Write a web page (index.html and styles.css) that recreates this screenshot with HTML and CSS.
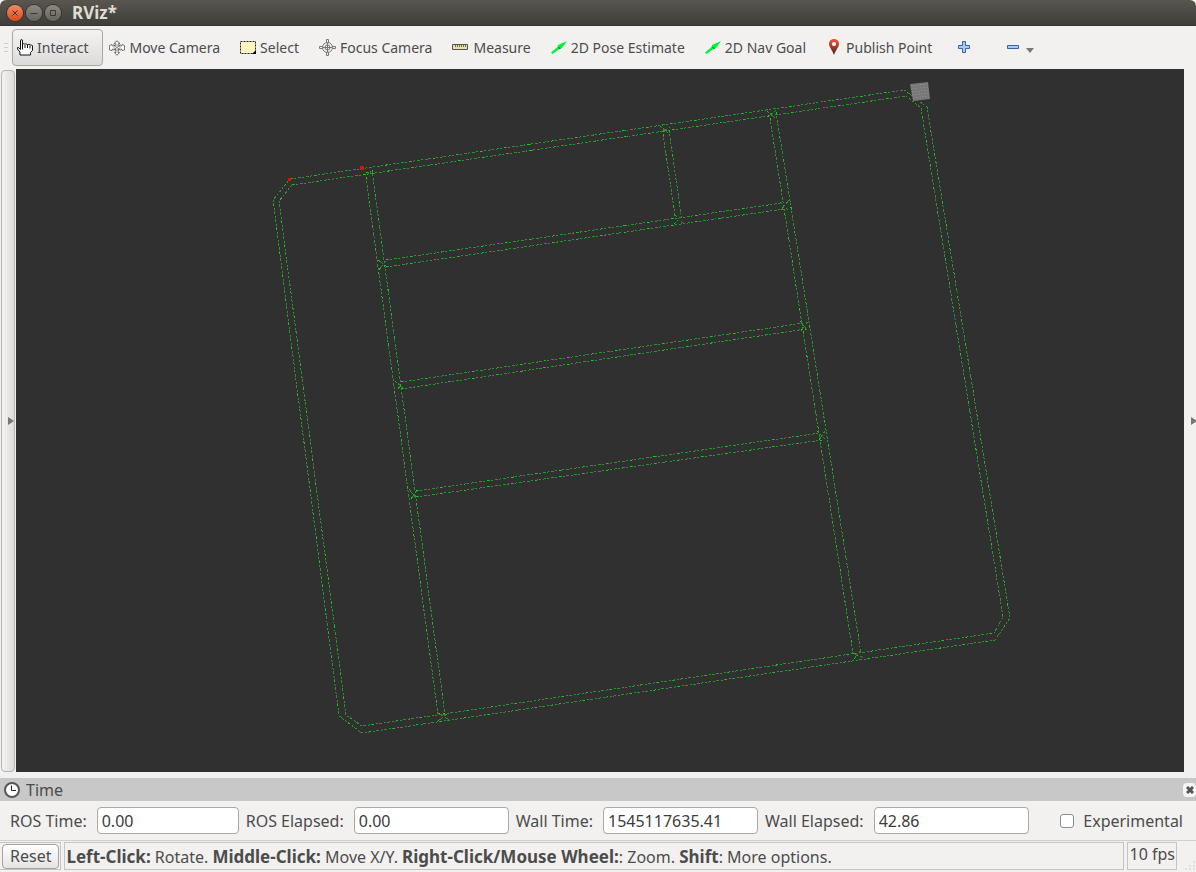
FILE: index.html
```html
<!DOCTYPE html>
<html lang="en">
<head>
<meta charset="utf-8">
<meta name="viewport" content="width=device-width, initial-scale=1">
<title>RViz*</title>
<link rel="stylesheet" href="styles.css">
</head>
<body>

<header class="titlebar">
  <button class="win-btn close" aria-label="Close"><svg width="16" height="16" viewBox="0 0 16 16"><path d="M5.500 5.500l5 5M10.500 5.500l-5 5"/></svg></button>
  <button class="win-btn" aria-label="Minimize"><svg width="16" height="16" viewBox="0 0 16 16"><path d="M4.500 8.500h7"/></svg></button>
  <button class="win-btn" aria-label="Maximize"><svg width="16" height="16" viewBox="0 0 16 16"><path d="M5.500 5.500h5v5h-5z"/></svg></button>
  <h1>RViz*</h1>
</header>

<nav class="toolbar">
  <span class="grip"></span>
  <button class="tool active">
    <svg width="16" height="18" viewBox="0 0 16 18"><path d="M5.500 11V2.500q0-1.500-1-1.500T3.500 2.500V11L1.500 9Q0 8.500.5 10.500L3 13.500V16.500H13.500V14L15.500 12V7.500Q15 6 13.500 6.500Q12 5.500 10.500 6Q9 5 7.500 5.500Q6.500 5 5.500 5.500" fill="#fff" stroke="#111" transform="translate(0 -.5)"/><path d="M8 6v3M10.500 6v3M13 6.500v3" stroke="#111" fill="none"/></svg>
    Interact
  </button>
  <button class="tool">
    <svg width="16" height="16" viewBox="0 0 16 16" fill="#fff" stroke="#555"><path d="M8 .8L11 3.500H9.500L10 5.500L12.500 6L13 4.500L15.500 5.500V10L13 10.500L12.500 9L9.500 9.500L9 12.500H10.500L8 15.300L5.500 12.500H7L6.500 9.500L3.500 9L3 10.500L.5 10V5.500L3 4.500L3.500 6L6 5.500L6.500 3.500H5z" stroke-width=".8"/><path d="M4.500 4.500l7 6M11.500 4.500l-7 6M5 7.500l3-3 3 3-3 3z" fill="none" stroke-width=".7"/></svg>
    Move Camera
  </button>
  <button class="tool">
    <svg width="16" height="14" viewBox="0 0 16 14"><path d="M.5 .5h15v12H.5z" fill="#fdf5bd" stroke="#222" stroke-dasharray="2 1"/><path d="M16 9v4h-4z"/></svg>
    Select
  </button>
  <button class="tool">
    <svg width="17" height="17" viewBox="0 0 17 17" fill="none" stroke="#777"><circle cx="8.500" cy="8.500" r="5"/><circle cx="8.500" cy="8.500" r="2.500"/><path d="M7.500 4V.5h2V4M7.500 13v3.500h2V13M4 7.500H.5v2H4M13 7.500h3.500v2H13M8.500 4v9M4 8.500h9"/></svg>
    Focus Camera
  </button>
  <button class="tool">
    <svg width="17" height="8" viewBox="0 0 17 8"><path d="M.5 .5h15v5H.5z" fill="#eadfab" stroke="#555"/><path d="M3.500 1v2M5.500 1v2M7.500 1v2M9.500 1v2M11.500 1v2M13.500 1v2" stroke="#776f4a"/></svg>
    Measure
  </button>
  <button class="tool">
    <svg width="16" height="14" viewBox="0 0 16 14"><path d="M0 11.500L6.500 6 7 4 16 0 11 7 8.500 8 1.500 13z" fill="#00f43c"/><path d="M7 5.500l3 2-1.500.5z" fill="#075b17"/></svg>
    2D Pose Estimate
  </button>
  <button class="tool">
    <svg width="16" height="14" viewBox="0 0 16 14"><path d="M0 11.500L6.500 6 7 4 16 0 11 7 8.500 8 1.500 13z" fill="#00f43c"/><path d="M7 5.500l3 2-1.500.5z" fill="#075b17"/></svg>
    2D Nav Goal
  </button>
  <button class="tool pin">
    <svg width="12" height="18" viewBox="0 0 12 18"><defs><linearGradient id="pin" x2="0" y2="1"><stop stop-color="#f4553a"/><stop offset="1" stop-color="#4d2410"/></linearGradient></defs><path d="M6 0C2.500 0 1 2.500 1 5c0 3 3 5.500 5 11 2-5.500 5-8 5-11 0-2.500-1.500-5-5-5z" fill="url(#pin)"/><circle cx="6" cy="5" r="2" fill="#fff"/></svg>
    Publish Point
  </button>
  <button class="tool add" aria-label="Add tool">
    <svg width="12" height="14" viewBox="0 0 12 14"><path d="M4.500.5h3v4h4v3h-4v4h-3v-4h-4v-3h4z" fill="#a9caef" stroke="#3465a4"/></svg>
  </button>
  <button class="tool remove" aria-label="Remove tool">
    <svg width="12" height="14" viewBox="0 0 12 14"><path d="M.5 4.500h11v3H.5z" fill="#a9caef" stroke="#3465a4"/></svg>
    <svg width="8" height="5" viewBox="0 0 8 5" class="caret"><path d="M0 0h8L4 5z" fill="#777"/></svg>
  </button>
</nav>

<main class="view">
  <button class="side left" aria-label="Show left panel"><svg width="6" height="8" viewBox="0 0 6 8"><path d="M0 0l6 4-6 4z" fill="#777"/></svg></button>
  <svg class="map" viewBox="16 69 1168 703" preserveAspectRatio="xMidYMid slice">
    <defs>
      <g id="roads">
        <!-- outer ring -->
        <path d="M290 179L904 90L927 107L1010 618L995 640L362 733L339 716L273 200Z"/>
        <path d="M292 185L906 96L921 108L1003 617L994 633L362 726L346 715L279 201Z"/>
        <!-- long streets -->
        <path d="M366 177L438 715M372 170L445 715"/>
        <path d="M770 118L853 653M776 112L861 653"/>
        <path d="M663 134L675 216M669 130L681 214"/>
        <!-- cross streets -->
        <path d="M386 260L782 203M386 267L784 209"/>
        <path d="M401 382L804 323M401 389L806 329"/>
        <path d="M416 491L820 433M416 497L822 440"/>
        <!-- junctions -->
        <path d="M366 172L375 174M367 175L373 169M660 126L669 134M662 132L670 127M767 111L776 119M768 117L777 109"/>
        <path d="M378 260L386 266M379 270L386 260M395 381L403 388M398 389L403 381M409 489L416 498M411 499L417 490"/>
        <path d="M675 215L683 223M674 224L682 216M780 202L788 210M781 210L789 200M800 321L807 330M801 331L808 321M817 431L825 439M819 440L825 431"/>
        <path d="M438 713L449 720M438 721L448 713M853 653L864 658M854 659L861 650"/>
      </g>
    </defs>
    <use href="#roads" class="road"/>
    <use href="#roads" class="road-bright"/>
    <path d="M910 84l18-2 2 17-17 2z" fill="#777"/>
    <path d="M911 86l17-2M911 89l17-2M912 92l17-2M912 95l17-2M913 98l16-2" stroke="#8b8b8b" stroke-dasharray="2 1"/>
    <path d="M360 166h4v4h-4zM288 178h3v3h-3z" fill="#e80c08"/>
  </svg>
  <button class="side right" aria-label="Show right panel"><svg width="6" height="8" viewBox="0 0 6 8"><path d="M0 0l6 4-6 4z" fill="#777"/></svg></button>
</main>

<section class="time">
  <div class="time-head">
    <svg width="16" height="16" viewBox="0 0 16 16"><circle cx="8" cy="8" r="7" fill="#fff" stroke="#555" stroke-width="2"/><path d="M7.500 3.500v5H12" fill="none" stroke="#222"/></svg>
    <h2>Time</h2>
    <button class="panel-close" aria-label="Close panel"><svg width="8" height="8" viewBox="0 0 8 8"><path d="M1 1l6 6M7 1L1 7" stroke="#555" stroke-width="3"/></svg></button>
  </div>
  <form class="time-row">
    <label for="ros-time">ROS Time:</label>
    <input type="text" id="ros-time" value="0.00" class="short">
    <label for="ros-elapsed">ROS Elapsed:</label>
    <input type="text" id="ros-elapsed" value="0.00">
    <label for="wall-time">Wall Time:</label>
    <input type="text" id="wall-time" value="1545117635.41">
    <label for="wall-elapsed">Wall Elapsed:</label>
    <input type="text" id="wall-elapsed" value="42.86">
    <label class="check"><input type="checkbox"> Experimental</label>
  </form>
</section>

<footer class="status">
  <div class="cell reset"><button>Reset</button></div>
  <p class="cell hint"><b>Left-Click:</b> Rotate. <b>Middle-Click:</b> Move X/Y. <b>Right-Click/Mouse Wheel:</b>: Zoom. <b>Shift</b>: More options.</p>
  <div class="cell fps">10 fps</div>
  <svg class="resize" width="16" height="28" viewBox="0 0 16 28"><path d="M13 20h2M9 24h2M13 24h2M5 27h2M9 27h2M13 27h2" stroke="#cfcdcb"/></svg>
</footer>

</body>
</html>
```
FILE: styles.css
```css
* {
  box-sizing: border-box;
}
body {
  margin: 0;
  min-height: 100vh;
  display: flex;
  flex-direction: column;
  background: #f2f1f0;
  color: #4c4c4c;
  font-family: "Noto Sans", "Open Sans", sans-serif;
  font-size: 16px;
}
h1, h2, p {
  margin: 0;
}
button, input {
  font: inherit;
  color: inherit;
}
button {
  padding: 0;
  border: none;
  background: none;
}
svg {
  display: block;
  flex: none;
}

/* title bar */
.titlebar {
  display: flex;
  align-items: center;
  gap: 3px;
  height: 26px;
  padding-left: 7px;
  background: linear-gradient(#59564e, #3e3d39);
  border-bottom: 1px solid #353430;
  border-radius: 6px 6px 0 0;
}
.titlebar h1 {
  margin-left: 8px;
  font-size: 17px;
  line-height: 24px;
  color: #dfdbd2;
}
.win-btn {
  width: 16px;
  height: 16px;
  border-radius: 50%;
  background: linear-gradient(#8b8980, #66645d);
  box-shadow: 0 0 0 1px #35342f;
}
.win-btn.close {
  background: linear-gradient(#f58a63, #dc4a1c);
}
.win-btn path {
  fill: none;
  stroke: #3a3833;
}

/* toolbar */
.toolbar {
  display: flex;
  align-items: center;
  height: 43px;
  padding-left: 4px;
}
.grip {
  width: 4px;
  height: 9px;
  margin-right: 4px;
  background: repeating-linear-gradient(#d0cecb 0 1px, transparent 1px 4px);
}
.tool {
  display: flex;
  align-items: center;
  gap: 4px;
  height: 37px;
  padding: 0 14px 0 6px;
  font-size: 14px;
  white-space: nowrap;
}
.tool.active {
  padding: 0 14px 0 4px;
  border: 1px solid #a9a7a3;
  border-radius: 4px;
  background: linear-gradient(#f4f3f2, #dddbd9);
}
.tool.pin {
  gap: 6px;
  padding-left: 8px;
}
.tool.add {
  padding: 0 19px 0 12px;
}
.tool.remove {
  padding-left: 18px;
  gap: 7px;
}
.caret {
  margin-top: 6px;
}

/* 3d view */
.view {
  flex: 1;
  display: flex;
}
.map {
  flex: 1;
  min-width: 0;
  height: calc(100vh - 169px);
  background: #303030;
}
.side {
  display: flex;
  align-items: center;
}
.side.left {
  width: 14px;
  margin: 1px 1px 0;
  padding-left: 6px;
  border: 1px solid #b5b3b0;
  border-radius: 4px;
  background: linear-gradient(90deg, #f3f2f1, #dedcda);
}
.side.right {
  width: 12px;
  padding-left: 7px;
}
.road, .road-bright {
  fill: none;
  stroke: #2a922a;
  stroke-dasharray: 3 1 2 2;
  shape-rendering: crispEdges;
}
.road-bright {
  stroke: #22c022;
  stroke-dasharray: 2 22;
}

/* time panel */
.time {
  margin-top: 6px;
}
.time-head {
  display: flex;
  align-items: center;
  gap: 6px;
  height: 23px;
  padding-left: 4px;
  background: #c8c8c8;
}
.time-head h2 {
  font-size: 16px;
  line-height: 22px;
  font-weight: normal;
}
.panel-close {
  display: flex;
  align-items: center;
  justify-content: center;
  width: 13px;
  height: 14px;
  margin-left: auto;
  border-radius: 4px;
  background: #f6f5f4;
}
.time-row {
  display: flex;
  align-items: center;
  gap: 7px;
  height: 39px;
  padding: 0 13px 0 10px;
  white-space: nowrap;
}
.time-row label {
  margin-right: 3px;
}
.time-row input[type="text"] {
  flex: 0 1 155px;
  min-width: 0;
  height: 27px;
  padding: 0 4px;
  border: 1px solid #aaa8a4;
  border-radius: 4px;
  background: #fff;
  color: #3c3c3c;
}
.time-row input.short {
  flex-basis: 142px;
}
.time-row .check {
  display: flex;
  align-items: center;
  gap: 9px;
  margin: 0 0 0 auto;
}
.check input {
  appearance: none;
  width: 14px;
  height: 14px;
  margin: 0;
  border: 1px solid #8f8d8a;
  border-radius: 3px;
  background: #fff;
}

/* status bar */
.status {
  display: flex;
  gap: 3px;
  height: 32px;
  padding: 1px 0;
  border-top: 1px solid #d2d0ce;
}
.cell {
  height: 28px;
  border: 1px solid #c6c4c2;
  line-height: 28px;
  white-space: nowrap;
}
.reset {
  padding: 1px 1px 0 2px;
  border-left: none;
}
.reset button {
  display: block;
  height: 25px;
  padding: 0 7px;
  border: 1px solid #a5a3a0;
  border-radius: 4px;
  background: linear-gradient(#fff, #e6e4e2);
  line-height: 23px;
}
.hint {
  flex: 1;
  padding-left: 1px;
}
.hint b {
  font-size: 17px;
}
.fps {
  padding: 0 1px 0 2px;
  line-height: 22px;
}
```
